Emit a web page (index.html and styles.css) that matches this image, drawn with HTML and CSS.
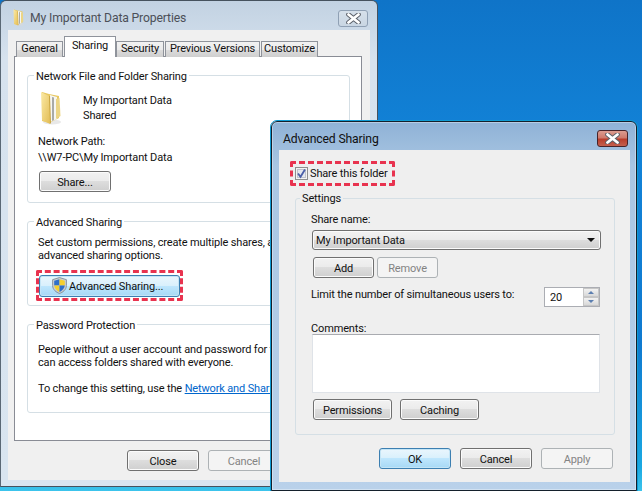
FILE: index.html
```html
<!DOCTYPE html>
<html lang="en">
<head>
<meta charset="utf-8">
<title>My Important Data Properties</title>
<link rel="stylesheet" href="styles.css">
</head>
<body>
<svg class="defs" width="0" height="0" aria-hidden="true">
  <defs>
    <linearGradient id="fg" x1="0" y1="0" x2="1" y2="1"><stop offset="0" stop-color="#fbeaa6"/><stop offset="1" stop-color="#e3bd55"/></linearGradient>
    <symbol id="folder" viewBox="0 0 22 34">
      <ellipse cx="12" cy="31" rx="9" ry="2.4" fill="#d8d8d8" opacity=".6"/>
      <path d="M2 1 L9 3 L19 5 L19 27 L9 32 L2 30 Z" fill="#e8c860"/>
      <path d="M10 4 L17 6 L17 28 L10 31 Z" fill="#f6f6f2"/>
      <path d="M12 6 L14 6.6 L14 29 L12 30 Z" fill="#a9aaa6"/>
      <path d="M16 8 L19.5 7 L20.5 25 L16 28 Z" fill="#ecd584"/>
      <path d="M1 1 L9 5 L10 33 L2 29 Z" fill="url(#fg)"/>
      <path d="M9 5 L10 33 L11 32 L10 5 Z" fill="#c9a544"/>
    </symbol>
    <symbol id="xmark" viewBox="0 0 15 11">
      <path d="M2.5 1.5 L12.5 9.5 M12.5 1.5 L2.5 9.5" stroke="#5a5f68" stroke-width="4.6" stroke-linecap="round" fill="none"/>
      <path d="M2.5 1.5 L12.5 9.5 M12.5 1.5 L2.5 9.5" stroke="#fff" stroke-width="2.8" stroke-linecap="round" fill="none"/>
    </symbol>
  </defs>
</svg>
<main class="desktop">
  <section class="window props">
    <header class="titlebar">
      <svg class="title-icon" aria-hidden="true"><use href="#folder"/></svg>
      <span class="title-text muted">My Important Data Properties</span>
      <span class="close close-idle"><svg class="x" aria-hidden="true"><use href="#xmark"/></svg></span>
    </header>
    <div class="client props-client">
      <nav class="tabs">
        <span class="tab t1">General</span>
        <span class="tab t2 active">Sharing</span>
        <span class="tab t3">Security</span>
        <span class="tab t4">Previous Versions</span>
        <span class="tab t5">Customize</span>
      </nav>
      <div class="panel">
        <fieldset class="group">
          <legend>Network File and Folder Sharing</legend>
          <div class="body b1">
            <div class="share-head">
              <svg class="big-folder" aria-hidden="true"><use href="#folder"/></svg>
              <div class="lines"><div>My Important Data</div><div>Shared</div></div>
            </div>
            <div class="path-label">Network Path:</div>
            <div class="path-value">\\W7-PC\My Important Data</div>
            <button class="btn share-btn">Share...</button>
          </div>
        </fieldset>
        <fieldset class="group">
          <legend>Advanced Sharing</legend>
          <div class="body b2">
            <div class="lines tight">
              <div class="nowrap">Set custom permissions, create multiple shares, and set other</div>
              <div>advanced sharing options.</div>
            </div>
            <div class="dashed adv-mark">
              <button class="btn focus adv-btn">
                <svg class="shield" viewBox="0 0 14 16" aria-hidden="true">
                  <path d="M7 .5 L13.5 2.5 V8 C13.5 12 10 14.5 7 15.5 C4 14.5 .5 12 .5 8 V2.5 Z" fill="#c9ced4" stroke="#7d8791" stroke-width=".8"/>
                  <path d="M7 2 V8 H2 V3.5 Z" fill="#2f6fc9"/>
                  <path d="M7 2 L12 3.5 V8 H7 Z" fill="#f5cf2e"/>
                  <path d="M2 8 H7 V14 C4.8 13 2.4 11 2 8 Z" fill="#f5cf2e"/>
                  <path d="M7 8 H12 C11.6 11 9.2 13 7 14 Z" fill="#2f6fc9"/>
                </svg>
                <span>Advanced Sharing...</span>
              </button>
            </div>
          </div>
        </fieldset>
        <fieldset class="group">
          <legend>Password Protection</legend>
          <div class="body b3">
            <div class="lines tight">
              <div class="nowrap">People without a user account and password for this computer</div>
              <div>can access folders shared with everyone.</div>
            </div>
            <div class="nowrap change">To change this setting, use the <a href="#">Network and Sharing Center</a>.</div>
          </div>
        </fieldset>
      </div>
      <div class="actions props-actions">
        <button class="btn wide">Close</button>
        <button class="btn wide off">Cancel</button>
      </div>
    </div>
  </section>

  <section class="window dialog">
    <header class="titlebar">
      <span class="title-text">Advanced Sharing</span>
      <span class="close close-red"><svg class="x" aria-hidden="true"><use href="#xmark"/></svg></span>
    </header>
    <div class="client dialog-client">
      <div class="dashed check-mark">
        <svg class="check" viewBox="0 0 13 13" aria-hidden="true">
          <rect x=".5" y=".5" width="12" height="12" fill="#f4f4f4" stroke="#8e8f8f"/>
          <rect x="2.5" y="2.5" width="8" height="8" fill="#e6e9ef" stroke="#c0c4cc"/>
          <path d="M3 6.5 L5.5 9.8 L10 2.6" fill="none" stroke="#4a5fa8" stroke-width="1.8"/>
        </svg>
        <span>Share this folder</span>
      </div>
      <fieldset class="group settings">
        <legend>Settings</legend>
        <div class="body b4">
          <div class="label">Share name:</div>
          <div class="combo"><span>My Important Data</span><i class="arrow"></i></div>
          <div class="row add-row">
            <button class="btn add">Add</button>
            <button class="btn add off">Remove</button>
          </div>
          <div class="limit">
            <span class="limit-text">Limit the number of simultaneous users to:</span>
            <div class="spin">
              <span class="spin-val">20</span>
              <span class="spin-btns"><b class="spin-b"><i class="up"></i></b><b class="spin-b"><i class="down"></i></b></span>
            </div>
          </div>
          <div class="label comments">Comments:</div>
          <div class="textarea"></div>
          <div class="row perm-row">
            <button class="btn perm">Permissions</button>
            <button class="btn perm">Caching</button>
          </div>
        </div>
      </fieldset>
      <div class="actions dialog-actions">
        <button class="btn wide focus">OK</button>
        <button class="btn wide">Cancel</button>
        <button class="btn wide off">Apply</button>
      </div>
    </div>
  </section>
</main>
</body>
</html>
```
FILE: styles.css
```css
* { box-sizing: border-box; }
html, body { margin: 0; padding: 0; }
body {
  width: 642px; height: 491px; overflow: hidden;
  font-family: Roboto, "Open Sans", sans-serif;
  font-size: 11px; letter-spacing: -.15px; line-height: 15px; color: #111;
}
.defs { position: absolute; }
.desktop {
  position: relative; width: 642px; height: 491px; overflow: hidden;
  background: linear-gradient(180deg, #0f74c8 0, #1283d8 30%, #0f7ad0 70%, #1aa8e2 95%, #3cc4ec 100%);
}
.window { position: absolute; border-radius: 6px 6px 0 0; }
.props {
  left: 0; top: 0; width: 378px; height: 487px; padding: 0 7px;
  background: linear-gradient(180deg, #c2d2e2 0, #d6e2ee 12%, #d9e5f0 100%);
  border: 1px solid #46525e; border-left-color: #5a6875;
}
.dialog {
  left: 271px; top: 121px; width: 366px; height: 370px; padding: 0 7px;
  background: linear-gradient(180deg, #8fb2d6 0, #a9c6e3 12%, #b9d1ea 100%);
  border: 1px solid #14202c;
  box-shadow: inset 0 0 0 1px rgba(255,255,255,.35);
  outline: 1px solid #0e9ad2;
}
.titlebar { display: flex; align-items: center; height: 29px; padding-top: 6px; position: relative; }
.props .titlebar { padding-left: 3px; }
.dialog .titlebar { height: 28px; padding-left: 4px; }
.title-icon { width: 15px; height: 17px; margin-right: 4px; flex: none; margin-top: -3px; }
.title-text { font-size: 12.2px; letter-spacing: -.15px; }
.muted { color: #4c5058; }
.close {
  position: absolute; top: 9px; display: flex; align-items: center; justify-content: center;
  height: 17px; border-radius: 3px;
}
.close-idle {
  right: 2px; width: 30px; border: 1px solid #8fa0b4;
  background: linear-gradient(180deg, #d6e0ea, #c9d6e3);
}
.close-red {
  right: 1px; top: 8px; width: 31px; border: 1px solid #47242a;
  background: linear-gradient(180deg, #dc9c90 0, #cf7a6c 45%, #b93e2c 55%, #c4604e 100%);
}
.x { width: 15px; height: 11px; }

.client { background: #f0f0f0; }
.props-client { width: 362px; height: 450px; padding: 7px 8px 0 6px; }
.dialog-client { width: 351px; height: 332px; padding: 11px 0 0 11px; background: #efefef; }

.tabs { display: flex; align-items: flex-end; height: 20px; padding-left: 2px; margin-bottom: -1px; position: relative; z-index: 1; }
.tab {
  height: 16px; margin-right: 1px; text-align: center; line-height: 14px; white-space: nowrap;
  border: 1px solid #8f939b; border-bottom: 0;
  background: linear-gradient(180deg, #f2f2f2 0, #ebebeb 50%, #dcdcdc 50%, #cfcfcf 100%);
}
.tab.active { height: 21px; background: #fff; margin: 0; line-height: 18px; border-color: #8f939b; }
.t1 { width: 47px; }
.t2 { width: 52px; }
.t3 { width: 48px; }
.t4 { width: 95px; }
.t5 { width: 57px; }
.panel {
  width: 348px; height: 385px; background: #fff; border: 1px solid #898c95;
  padding: 10px 0 0 12px;
}
.group {
  margin: 0 0 10px; padding: 0; width: 323px; min-width: 0;
  border: 1px solid #d5dfe5; border-radius: 3px;
}
legend { margin-left: 6px; padding: 0 2px; line-height: 19px; height: 16px; }
.settings legend { margin-left: 4px; line-height: 18px; }
.body { position: relative; overflow: hidden; }
.b1 { height: 119px; padding: 8px 0 0 10px; }
.b2 { height: 76px; padding: 7px 0 0 10px; }
.b3 { height: 80px; padding: 11px 0 0 10px; }
.b4 { height: 228px; padding: 0 0 0 15px; }
.share-head { display: flex; height: 43px; padding-left: 2px; }
.big-folder { width: 22px; height: 34px; flex: none; margin-right: 21px; }
.lines { line-height: 15px; padding-top: 2px; }
.lines.tight { line-height: 13px; padding-top: 0; }
.nowrap { white-space: nowrap; }
.path-label { height: 16px; }
.path-value { height: 15px; }
.btn {
  font: inherit; letter-spacing: inherit; color: #111; padding: 1px 0 0; height: 21px; white-space: nowrap;
  border: 1px solid #707070; border-radius: 3px;
  box-shadow: inset 0 0 0 1px #fbfbfb;
  background: linear-gradient(180deg, #f2f2f2 0, #ebebeb 48%, #dddddd 50%, #cfcfcf 100%);
}
.btn.off { background: #f4f4f4; border-color: #adb2b5; color: #838383; box-shadow: none; }
.btn.focus {
  border-color: #3c7fb1;
  background: linear-gradient(180deg, #eaf6fd 0, #d9f0fc 48%, #bee6fd 50%, #a7d9f5 100%);
  box-shadow: inset 0 0 0 1px #c4e5f6;
}
.share-btn { display: block; width: 72px; margin: 6px 0 0 1px; }
.wide { width: 72px; }
.dashed { border: 3px dashed #e8334f; border-radius: 2px; }
.adv-mark { width: 147px; height: 31px; margin: 8px 0 0 -2px; display: flex; align-items: center; justify-content: center; }
.adv-btn { width: 141px; height: 22px; display: flex; align-items: center; padding: 1px 0 0 12px; gap: 2px; }
.shield { width: 15px; height: 17px; flex: none; margin-top: -1px; }
.change { margin-top: 12px; }
a { color: #0066cc; text-decoration: underline; }
.actions { display: flex; gap: 9px; }
.props-actions { margin: 9px 0 0 113px; }
.dialog-actions { margin: 13px 0 0 89px; }

.check-mark { width: 105px; height: 25px; display: flex; align-items: center; gap: 2px; padding-left: 2px; white-space: nowrap; }
.check { width: 13px; height: 13px; flex: none; }
.settings { width: 320px; margin: 4px 0 0 5px; }
.label { height: 15px; }
.b4 .label:first-child { margin-top: 6px; }
.combo {
  width: 289px; height: 20px; margin: 3px 0 0 1px; padding: 0 5px 0 3px;
  display: flex; align-items: center; justify-content: space-between;
  border: 1px solid #707070; border-radius: 3px; box-shadow: inset 0 0 0 1px #fbfbfb;
  background: linear-gradient(180deg, #f2f2f2 0, #ebebeb 48%, #dddddd 50%, #cfcfcf 100%);
}
.arrow { width: 0; height: 0; border: 4px solid transparent; border-top: 4px solid #111; border-bottom: 0; }
.row { display: flex; margin-left: 2px; }
.add-row { gap: 3px; margin-top: 7px; }
.add { width: 61px; height: 21px; }
.limit { display: flex; align-items: center; justify-content: space-between; width: 289px; height: 20px; margin-top: 9px; }
.limit-text { align-self: flex-start; }
.spin { display: flex; width: 56px; height: 20px; border: 1px solid #abadb3; background: #fff; }
.spin-val { flex: 1; padding-left: 5px; line-height: 19px; }
.spin-btns { display: flex; flex-direction: column; width: 16px; }
.spin-b { flex: 1; display: flex; align-items: center; justify-content: center; background: linear-gradient(180deg, #f2f2f2, #d8d8d8); border: 1px solid #c6c6c6; }
.up { width: 0; height: 0; border: 3.5px solid transparent; border-bottom: 3.5px solid #5c7fb0; border-top: 0; }
.down { width: 0; height: 0; border: 3.5px solid transparent; border-top: 3.5px solid #5c7fb0; border-bottom: 0; }
.comments { margin-top: 14px; }
.textarea { width: 288px; height: 59px; margin: -2px 0 0 1px; background: #fff; border: 1px solid #dfe3e8; border-top-color: #a9abb0; }
.perm-row { gap: 8px; margin-top: 6px; }
.perm { width: 79px; height: 21px; }
```
